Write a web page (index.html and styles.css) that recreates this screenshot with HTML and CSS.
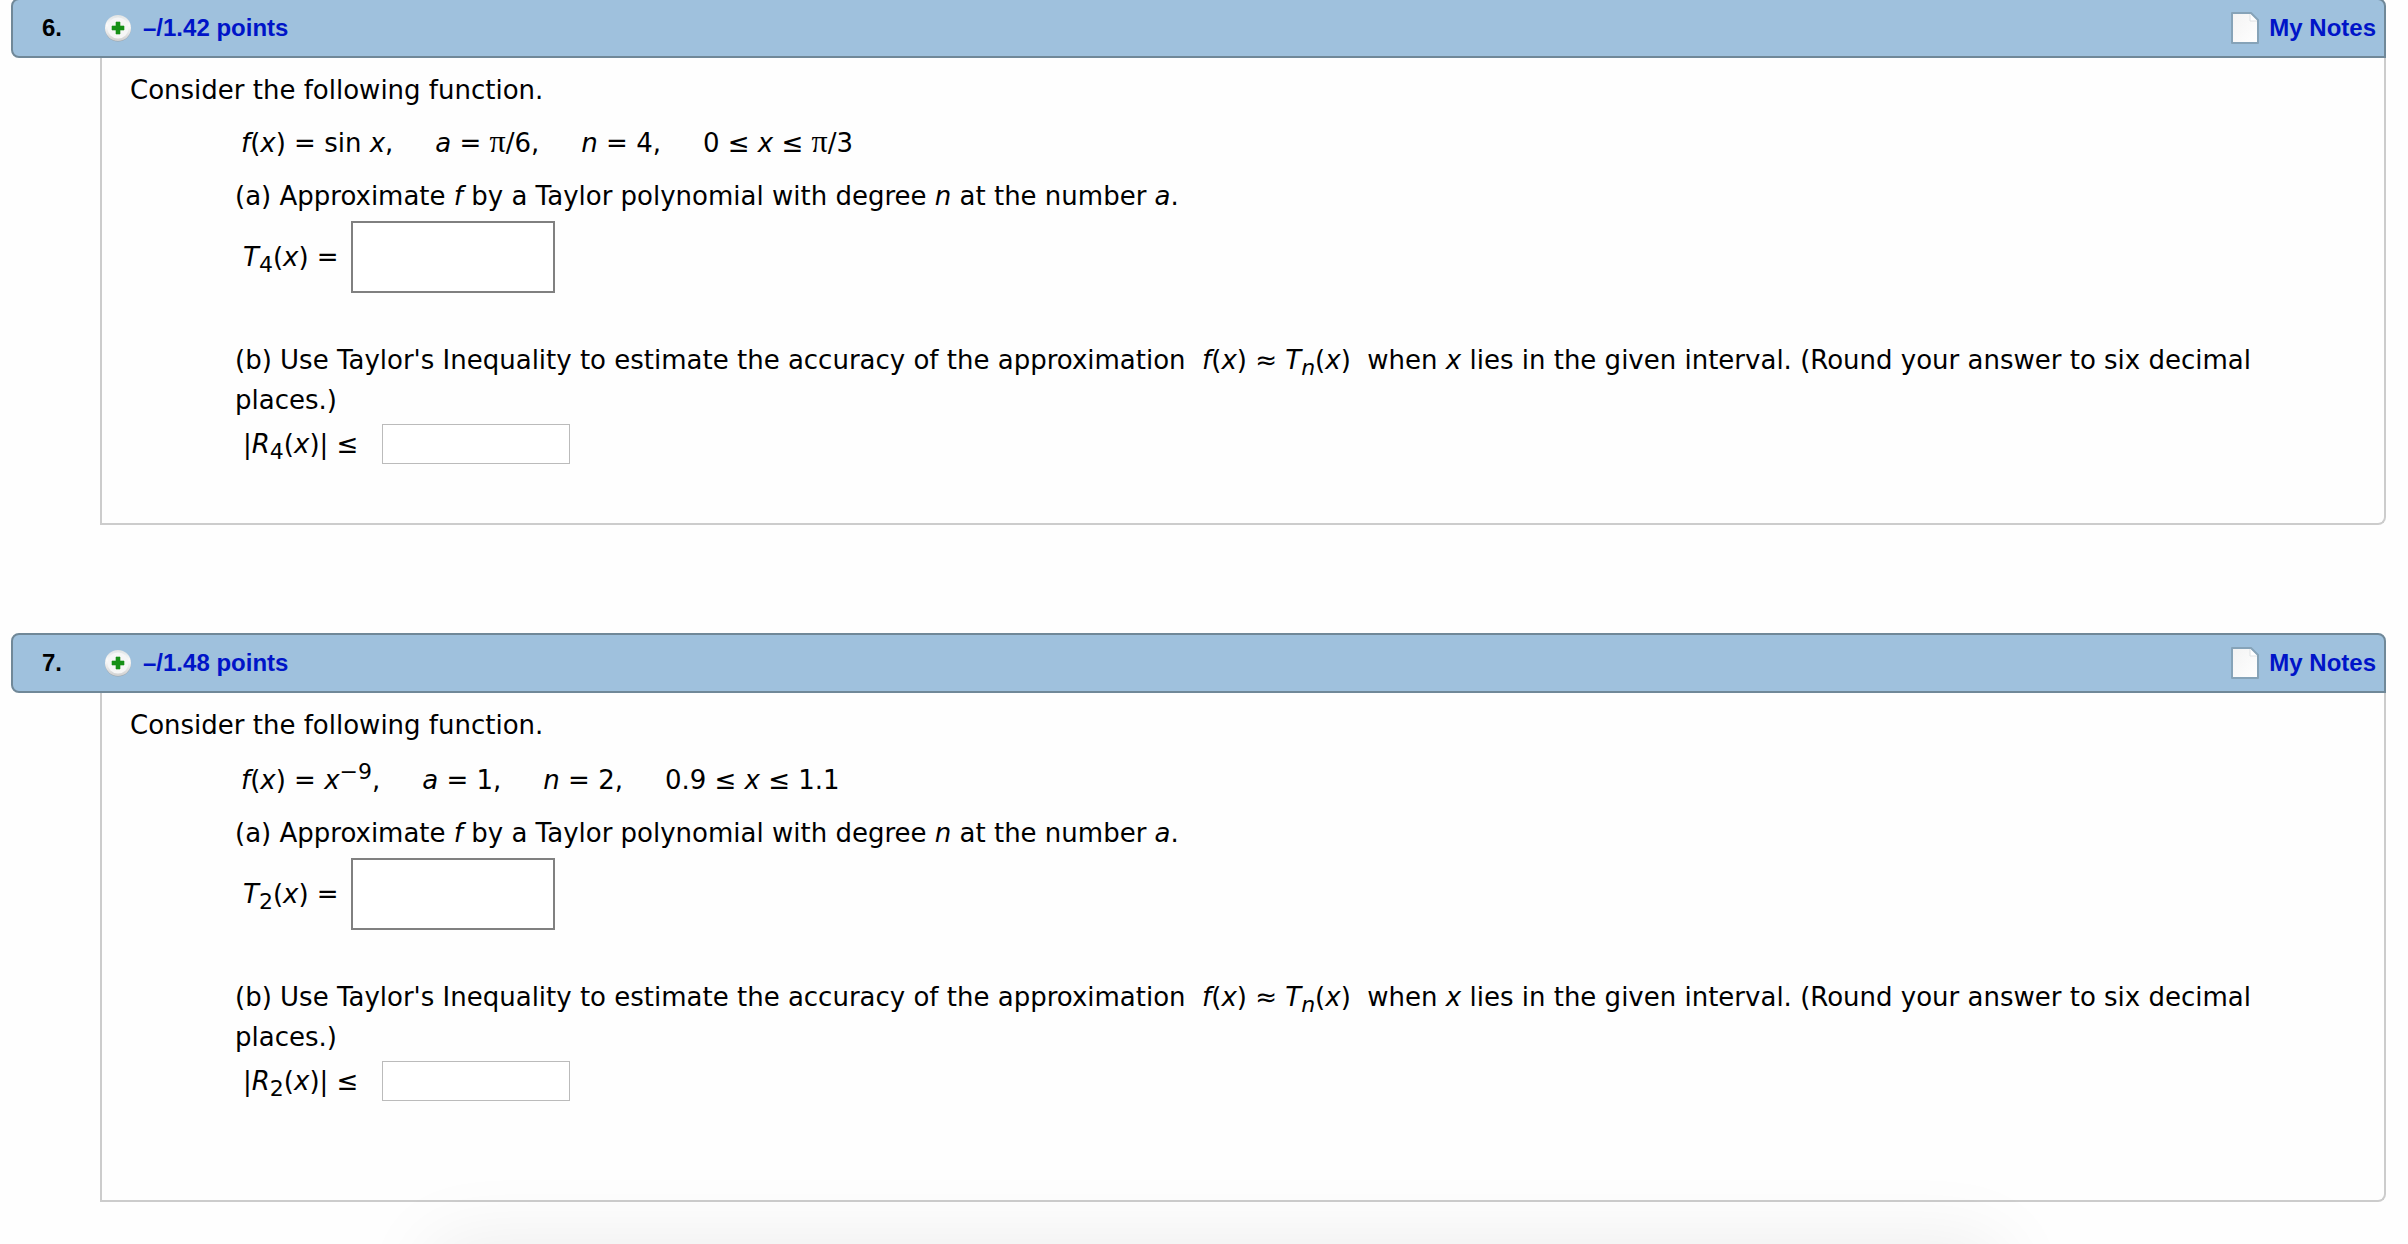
FILE: index.html
```html
<!DOCTYPE html>
<html lang="en">
<head>
    <meta charset="UTF-8">
    <meta name="viewport" content="width=device-width, initial-scale=1.0">
    <title>Homework</title>
    <link rel="stylesheet" href="styles.css">
</head>
<body>
    <svg class="defs" width="0" height="0">
        <defs>
            <linearGradient id="knob" x1="0" y1="0" x2="0" y2="1">
                <stop offset="0" stop-color="#dfe3e4"/>
                <stop offset="0.4" stop-color="#fbfbfb"/>
                <stop offset="1" stop-color="#d0d0d0"/>
            </linearGradient>
            <linearGradient id="paper" x1="0" y1="0" x2="1" y2="1">
                <stop offset="0" stop-color="#f3f3f3"/>
                <stop offset="1" stop-color="#ffffff"/>
            </linearGradient>
            <symbol id="plus-icon" viewBox="0 0 28 28">
                <circle cx="14" cy="14.6" r="13" fill="#9aa4aa"/>
                <circle cx="14" cy="14" r="13" fill="url(#knob)"/>
                <circle cx="14" cy="14" r="10.5" fill="#f6f6f6"/>
                <path d="M12 8h4v4h4v4h-4v4h-4v-4H8v-4h4z" fill="#169016" stroke="#169016" stroke-width="0.6"/>
            </symbol>
            <symbol id="note-icon" viewBox="0 0 28 32">
                <path d="M1 1h19l7 7v23H1z" fill="url(#paper)" stroke="#86a3b8" stroke-width="2" stroke-linejoin="round"/>
                <path d="M19 2v7h7z" fill="#ffffff"/>
                <path d="M19 2v7h7" fill="none" stroke="#dfe2e4"/>
            </symbol>
        </defs>
    </svg>

    <div class="question">
        <div class="header">
            <span class="number">6.</span>
            <button class="expand" aria-label="Show details"><svg width="28" height="28"><use href="#plus-icon"/></svg></button>
            <a class="points" href="#">–/1.42 points</a>
            <a class="notes" href="#"><svg width="28" height="32"><use href="#note-icon"/></svg>My Notes</a>
        </div>
        <div class="content">
            <p class="intro">Consider the following function.</p>
            <div class="parts">
                <p class="function">
                    <span><i>f</i>(<i>x</i>) = sin <i>x</i>,</span>
                    <span><i>a</i> = <span class="pi">π</span>/6,</span>
                    <span><i>n</i> = 4,</span>
                    <span>0 ≤ <i>x</i> ≤ <span class="pi">π</span>/3</span>
                </p>
                <p>(a) Approximate <i>f</i> by a Taylor polynomial with degree <i>n</i> at the number <i>a</i>.</p>
                <div class="answer">
                    <label for="t4"><i>T</i><sub>4</sub>(<i>x</i>) =</label>
                    <input class="math-box" type="text" id="t4">
                </div>
                <p class="part-b">(b) Use Taylor's Inequality to estimate the accuracy of the approximation &nbsp;<i>f</i>(<i>x</i>) ≈ <i>T</i><sub><i>n</i></sub>(<i>x</i>)&nbsp; when <i>x</i> lies in the given interval. (Round your answer to six decimal places.)</p>
                <div class="answer remainder">
                    <label for="r4">|<i>R</i><sub>4</sub>(<i>x</i>)| ≤</label>
                    <input class="text-box" type="text" id="r4">
                </div>
            </div>
        </div>
    </div>

    <div class="question last">
        <div class="header">
            <span class="number">7.</span>
            <button class="expand" aria-label="Show details"><svg width="28" height="28"><use href="#plus-icon"/></svg></button>
            <a class="points" href="#">–/1.48 points</a>
            <a class="notes" href="#"><svg width="28" height="32"><use href="#note-icon"/></svg>My Notes</a>
        </div>
        <div class="content">
            <p class="intro">Consider the following function.</p>
            <div class="parts">
                <p class="function">
                    <span><i>f</i>(<i>x</i>) = <i>x</i><sup>−9</sup>,</span>
                    <span><i>a</i> = 1,</span>
                    <span><i>n</i> = 2,</span>
                    <span>0.9 ≤ <i>x</i> ≤ 1.1</span>
                </p>
                <p>(a) Approximate <i>f</i> by a Taylor polynomial with degree <i>n</i> at the number <i>a</i>.</p>
                <div class="answer">
                    <label for="t2"><i>T</i><sub>2</sub>(<i>x</i>) =</label>
                    <input class="math-box" type="text" id="t2">
                </div>
                <p class="part-b">(b) Use Taylor's Inequality to estimate the accuracy of the approximation &nbsp;<i>f</i>(<i>x</i>) ≈ <i>T</i><sub><i>n</i></sub>(<i>x</i>)&nbsp; when <i>x</i> lies in the given interval. (Round your answer to six decimal places.)</p>
                <div class="answer remainder">
                    <label for="r2">|<i>R</i><sub>2</sub>(<i>x</i>)| ≤</label>
                    <input class="text-box" type="text" id="r2">
                </div>
            </div>
        </div>
    </div>

    <div class="bottom-shadow"></div>
</body>
</html>
```

FILE: styles.css
```css
* {
    box-sizing: border-box;
}
body {
    margin: -2px 22px 0 11px;
    background-color: #fefefe;
    color: black;
    font-family: Verdana, "DejaVu Sans", sans-serif;
    font-size: 26px;
    line-height: 40px;
}
p {
    margin: 0 0 13px;
}
.defs {
    position: absolute;
}
.question {
    margin-bottom: 108px;
}
.header {
    height: 60px;
    display: flex;
    align-items: center;
    padding: 0 8px 0 29px;
    background-color: #9fc1dd;
    border: 2px solid #708898;
    border-radius: 8px 8px 0 8px;
    font-family: Arial, "Liberation Sans", sans-serif;
    font-size: 24px;
    font-weight: bold;
}
.header a {
    color: #0014c8;
    text-decoration: none;
}
.number {
    width: 62px;
}
.expand {
    display: flex;
    margin: 0 11px 0 0;
    padding: 0;
    border: none;
    background: none;
    cursor: pointer;
}
.notes {
    display: flex;
    align-items: center;
    gap: 10px;
    margin-left: auto;
}
.content {
    margin-left: 89px;
    padding: 12px 60px 59px 28px;
    border: 2px solid #cccccc;
    border-top: none;
    border-radius: 0 0 8px 0;
}
.last {
    margin-bottom: 0;
}
.last .content {
    padding-bottom: 99px;
}
.parts {
    margin-left: 105px;
}
.function {
    display: flex;
    align-items: baseline;
    gap: 42px;
    margin-left: 6px;
}
.pi {
    font-family: "Liberation Serif", serif;
    font-size: 32px;
    line-height: 26px;
}
sub, sup {
    font-size: 22px;
}
sub {
    line-height: 20px;
    vertical-align: -6px;
}
sup {
    line-height: 28px;
    vertical-align: 10px;
}
.answer {
    display: flex;
    align-items: center;
    gap: 12px;
    margin: -8px 0 47px 8px;
}
.answer.remainder {
    gap: 24px;
    margin: 4px 0 0 8px;
}
.part-b {
    margin-bottom: 0;
}
input {
    padding: 0 8px;
    background-color: white;
    font: inherit;
}
.math-box {
    width: 204px;
    height: 72px;
    border: 2px solid #808080;
}
.text-box {
    width: 188px;
    height: 40px;
    border: 1px solid #bbbbbb;
}
.bottom-shadow {
    position: fixed;
    top: 100%;
    left: 18%;
    right: 17%;
    height: 100px;
    box-shadow: 0 0 80px rgba(0, 0, 0, 0.08);
    pointer-events: none;
}
```
